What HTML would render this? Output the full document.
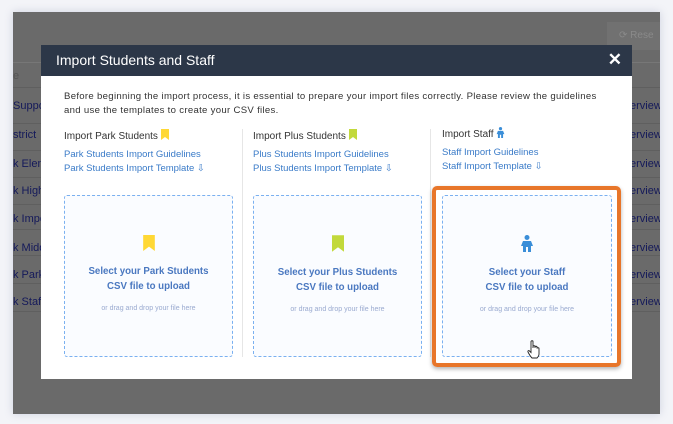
<!DOCTYPE html>
<html><head><style>
*{margin:0;padding:0;box-sizing:border-box}
body{width:673px;height:424px;background:#f3f4f8;font-family:"Liberation Sans",sans-serif;position:relative;overflow:hidden}
.shot{position:absolute;left:13px;top:12px;width:647px;height:402px;background:#6a6a6a;overflow:hidden;box-shadow:0 0 8px rgba(120,130,170,.3)}
.row{position:absolute;left:0;width:647px;height:1px;background:#5f5f5f}
.lt{position:absolute;left:0;font-size:11px;color:#14195a}
.rt{position:absolute;left:617px;font-size:11px;color:#14195a}
.modal{position:absolute;left:41px;top:45px;width:591px;height:334px;background:#fff}
.hdr{height:31px;background:#2c3748;color:#fff;font-size:14px;line-height:31px;padding-left:15px}
.x{position:absolute;right:10px;top:5px;font-size:17px;font-weight:bold;color:#fff}
.intro{position:absolute;left:23px;top:45px;width:570px;font-size:9.6px;line-height:14px;color:#333;white-space:nowrap;letter-spacing:0.3px}
.col{position:absolute;top:84px}
.col h4{font-weight:normal;font-size:10px;color:#333;margin-bottom:7px;height:12px}
.col a{display:block;font-size:9.5px;color:#3a7bc8;line-height:14px}
.box{position:absolute;top:150px;width:169px;height:162px;border:1px dashed #7ab0f0;border-radius:3px;background:#fafcff;text-align:center}
.box .t{font-size:9.7px;font-weight:bold;color:#4a78c0;line-height:15px;margin-top:8px}
.box .s{font-size:7px;color:#9aaad0;margin-top:11px}
.div{position:absolute;top:84px;width:1px;height:228px;background:#e6e6e6}
.bm{display:inline-block;width:8px;height:11px;vertical-align:-1px}
</style></head><body>
<div class="shot">
 <div style="position:absolute;left:594px;top:10px;width:53px;height:28px;background:#717171"></div>
 <div style="position:absolute;left:606px;top:18px;font-size:10px;color:#8a8a8a">⟳ Rese</div>
 <div style="position:absolute;left:0;top:50px;width:647px;height:1px;background:#777"></div>
 <div class="lt" style="top:58px;color:#555">e</div>
 <div class="row" style="top:75px"></div>
 <div class="lt" style="top:88px">Suppo</div><div class="rt" style="top:88px">erview</div>
 <div class="row" style="top:111px"></div>
 <div class="lt" style="top:117px">strict</div><div class="rt" style="top:117px">erview</div>
 <div class="row" style="top:138px"></div>
 <div class="lt" style="top:146px">k Elem</div><div class="rt" style="top:146px">erview</div>
 <div class="row" style="top:165px"></div>
 <div class="lt" style="top:173px">k High</div><div class="rt" style="top:173px">erview</div>
 <div class="row" style="top:192px"></div>
 <div class="lt" style="top:201px">k Impo</div><div class="rt" style="top:201px">erview</div>
 <div class="row" style="top:217px"></div>
 <div class="lt" style="top:230px">k Midd</div><div class="rt" style="top:230px">erview</div>
 <div class="row" style="top:243px"></div>
 <div class="lt" style="top:257px">k Park</div><div class="rt" style="top:257px">erview</div>
 <div class="row" style="top:271px"></div>
 <div class="lt" style="top:284px">k Staff</div><div class="rt" style="top:284px">erview</div>
 <div class="row" style="top:299px"></div>
</div>
<div class="modal">
 <div class="hdr">Import Students and Staff</div><div class="x">✕</div>
 <div class="intro">Before beginning the import process, it is essential to prepare your import files correctly. Please review the guidelines<br>and use the templates to create your CSV files.</div>
 <div class="col" style="left:23px"><h4>Import Park Students <svg class="bm" viewBox="0 0 8 11"><path d="M0 0H8V11L4 8L0 11Z" fill="#ffd835"/></svg></h4><a>Park Students Import Guidelines</a><a>Park Students Import Template ⇩</a></div>
 <div class="div" style="left:201px"></div>
 <div class="col" style="left:212px"><h4>Import Plus Students <svg class="bm" viewBox="0 0 8 11"><path d="M0 0H8V11L4 8L0 11Z" fill="#c2d93b"/></svg></h4><a>Plus Students Import Guidelines</a><a>Plus Students Import Template ⇩</a></div>
 <div class="div" style="left:389px"></div>
 <div class="col" style="left:401px;top:82px"><h4>Import Staff <svg width="9" height="11" viewBox="0 0 14 17" style="vertical-align:-1px"><circle cx="7" cy="2.5" r="2.5" fill="#3a8ed8"/><path d="M3 6H11L13 11H11V17H8V12H6V17H3V11H1Z" fill="#3a8ed8"/></svg></h4><a>Staff Import Guidelines</a><a>Staff Import Template ⇩</a></div>
 <div class="box" style="left:23px"><svg style="margin-top:39px" width="12" height="16" viewBox="0 0 8 11"><path d="M0 0H8V11L4 8L0 11Z" fill="#ffd835"/></svg><div class="t">Select your Park Students<br>CSV file to upload</div><div class="s">or drag and drop your file here</div></div>
 <div class="box" style="left:212px"><svg style="margin-top:39px" width="12" height="17" viewBox="0 0 8 11"><path d="M0 0H8V11L4 8L0 11Z" fill="#c2d93b"/></svg><div class="t">Select your Plus Students<br>CSV file to upload</div><div class="s">or drag and drop your file here</div></div>
 <div style="position:absolute;left:391px;top:141px;width:189px;height:181px;border:4px solid #e8762a;border-radius:5px;box-shadow:0 2px 4px rgba(0,0,0,.3)"></div>
 <div class="box" style="left:401px;width:170px"><svg style="margin-top:39px" width="14" height="17" viewBox="0 0 14 17"><circle cx="7" cy="2.5" r="2.5" fill="#3a8ed8"/><path d="M3 6H11L13 11H11V17H8V12H6V17H3V11H1Z" fill="#3a8ed8"/></svg><div class="t">Select your Staff<br>CSV file to upload</div><div class="s">or drag and drop your file here</div></div>
 <svg style="position:absolute;left:486px;top:295px" width="14" height="20" viewBox="0 0 14 20"><path d="M4 1.5C4 0.5 6 0.5 6 1.5V8V6.5C6 5.5 8 5.5 8 6.5V8V7C8 6 10 6 10 7V8.5C10 7.5 12 7.5 12 8.5V14C12 16 11 17 10 18H5C4 17 2 14 1 12C0.5 11 1.5 10 2.5 11L4 12.5Z" fill="#fff" stroke="#222" stroke-width="0.9"/></svg>
</div>
</body></html>
